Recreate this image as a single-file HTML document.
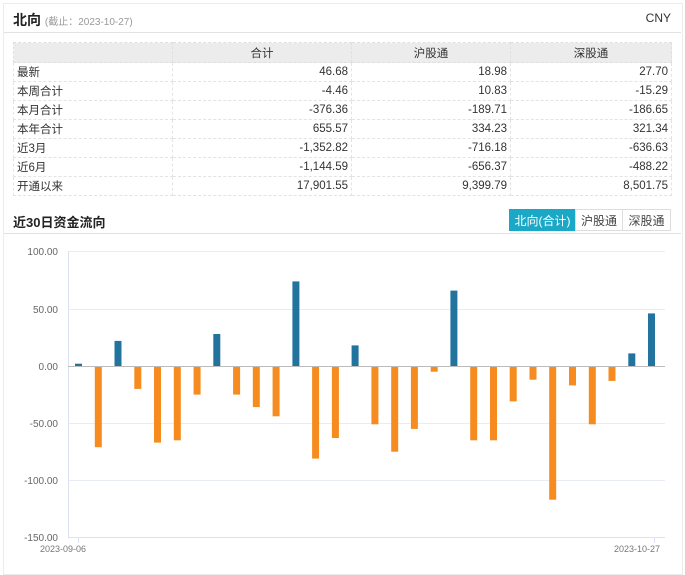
<!DOCTYPE html><html><head><meta charset="utf-8"><style>
body{margin:0;width:685px;height:561px;background:#fff;font-family:"Liberation Sans","Noto Sans CJK SC",sans-serif;position:relative;overflow:hidden}
.a{position:absolute}
.card{left:3px;top:3px;width:678px;height:570px;border:1px solid #ececec}
table{position:absolute;left:13px;top:42px;width:659px;border-collapse:collapse;font-size:11.5px;color:#333}
td{height:18px;border:1px dashed #e3e3e3;padding:0 3px;text-align:right}
td:first-child{text-align:left}
tr.h td{background:#ececec;text-align:center;height:19px;border-color:#e0e0e0}
.btn{top:209px;height:22px;line-height:22px;font-size:12px;text-align:center;border:1px solid #ddd;color:#444;box-sizing:border-box}
</style></head><body>
<div class="a card"></div>
<div class="a" style="left:13px;top:10px;font-size:14px;font-weight:bold;color:#222">北向 <span style="font-weight:normal;font-size:10px;color:#999">(截止：2023-10-27)</span></div>
<div class="a" style="right:14px;top:11px;font-size:12px;color:#333">CNY</div>
<div class="a" style="left:4px;top:32px;width:677px;border-top:1px solid #e2e2e2"></div>
<table>
<colgroup><col style="width:159px"><col style="width:179px"><col style="width:159px"><col></colgroup>
<tr class="h"><td></td><td>合计</td><td>沪股通</td><td>深股通</td></tr>
<tr><td>最新</td><td>46.68</td><td>18.98</td><td>27.70</td></tr>
<tr><td>本周合计</td><td>-4.46</td><td>10.83</td><td>-15.29</td></tr>
<tr><td>本月合计</td><td>-376.36</td><td>-189.71</td><td>-186.65</td></tr>
<tr><td>本年合计</td><td>655.57</td><td>334.23</td><td>321.34</td></tr>
<tr><td>近3月</td><td>-1,352.82</td><td>-716.18</td><td>-636.63</td></tr>
<tr><td>近6月</td><td>-1,144.59</td><td>-656.37</td><td>-488.22</td></tr>
<tr><td>开通以来</td><td>17,901.55</td><td>9,399.79</td><td>8,501.75</td></tr>
</table>
<div class="a" style="left:13px;top:212px;font-size:13px;font-weight:bold;color:#222">近30日资金流向</div>
<div class="a btn" style="left:509px;width:67px;background:#1aa8c6;border-color:#1aa8c6;color:#fff">北向(合计)</div>
<div class="a btn" style="left:575px;width:48px">沪股通</div>
<div class="a btn" style="left:622px;width:49px">深股通</div>
<div class="a" style="left:4px;top:233px;width:677px;border-top:1px solid #e2e2e2"></div>
<svg class="a" style="left:0;top:0" width="685" height="561" id="s">
<g stroke="#e8ecf4" stroke-width="1">
<line x1="68" y1="251.5" x2="665" y2="251.5"/><line x1="68" y1="309.5" x2="665" y2="309.5"/><line x1="68" y1="423.5" x2="665" y2="423.5"/><line x1="68" y1="480.5" x2="665" y2="480.5"/>
</g>
<line x1="68.5" y1="251" x2="68.5" y2="537" stroke="#dbe3f0"/>
<line x1="68" y1="537.5" x2="665" y2="537.5" stroke="#dbe3f0"/>
<line x1="78.5" y1="537" x2="78.5" y2="543" stroke="#dbe3f0"/><line x1="654.5" y1="537" x2="654.5" y2="543" stroke="#dbe3f0"/>
<g font-size="10" fill="#666" text-anchor="end" font-family="Liberation Sans">
<text x="58" y="255">100.00</text><text x="58" y="313">50.00</text><text x="58" y="370">0.00</text><text x="58" y="427">-50.00</text><text x="58" y="484">-100.00</text><text x="58" y="541">-150.00</text>
</g>
<g font-size="9" fill="#777" font-family="Liberation Sans"><text x="40" y="552">2023-09-06</text><text x="614" y="552">2023-10-27</text></g>
<g id="bars"></g>
<line x1="68" y1="366.5" x2="665" y2="366.5" stroke="#bbb"/>
</svg>
<script>
var v=[2,-71,22,-20,-67,-65,-25,28,-25,-36,-44,74,-81,-63,18,-51,-75,-55,-5,66,-65,-65,-31,-12,-117,-17,-51,-13,11,46];
var g=document.getElementById('bars'),h='';
v.forEach(function(d,i){var x=75+i*19.76,k=1.143,y=d>0?366-d*k:366,hh=Math.abs(d)*k;
h+='<rect x="'+x.toFixed(1)+'" y="'+y.toFixed(1)+'" width="7" height="'+hh.toFixed(1)+'" fill="'+(d>0?'#23739f':'#f68b1f')+'"/>';});
g.innerHTML=h;
</script>
</body></html>
